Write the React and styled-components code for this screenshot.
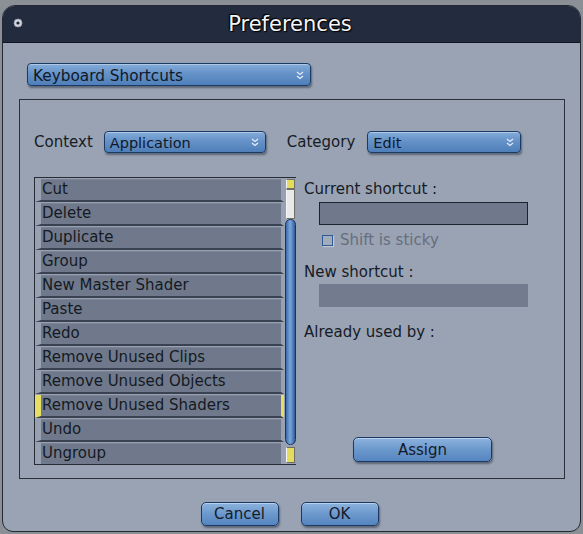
import React from 'react'
import styled, { createGlobalStyle } from 'styled-components'

const GlobalStyle = createGlobalStyle`
  html, body {
    margin: 0;
    padding: 0;
    background: #8b8f96;
  }
  body {
    font-family: "DejaVu Sans", Verdana, sans-serif;
    color: #161b26;
  }
`

const Window = styled.div`
  box-sizing: border-box;
  height: 527px;
  margin: 5px 2px 2px 2px;
  display: flex;
  flex-direction: column;
  background: #9aa3b3;
  border: 1px solid #232833;
  border-radius: 13px 13px 11px 11px;
  overflow: hidden;
`

const TitleBar = styled.div`
  position: relative;
  height: 36px;
  flex: none;
  display: flex;
  align-items: center;
  justify-content: center;
  background: #232c3e;
  border-bottom: 1px solid #10141c;
`

const CloseDot = styled.svg`
  position: absolute;
  left: 10px;
  top: 12px;
`

const Title = styled.div`
  font-size: 21px;
  color: #f4f5f8;
  text-shadow: 0 0 2px #000, 1px 1px 1px #000, -1px -1px 1px #000;
  margin-right: 3px;
`

const Body = styled.div`
  flex: 1;
  display: flex;
  flex-direction: column;
  padding: 20px 15px 0 16px;
`

const Dropdown = styled.div`
  box-sizing: border-box;
  width: ${p => p.width}px;
  height: ${p => p.height || 23}px;
  margin-left: ${p => p.indent || 0}px;
  flex: none;
  display: flex;
  align-items: flex-end;
  justify-content: space-between;
  padding: 0 6px 0 5px;
  border: 1px solid #1c3a66;
  border-radius: 4px;
  background: linear-gradient(#84acd9 0%, #6592c8 45%, #4f7fb9 100%);
  box-shadow: 1px 2px 2px rgba(20, 28, 45, 0.45), inset 0 1px 0 rgba(255, 255, 255, 0.35);
  font-size: ${p => p.fontSize || 14.5}px;
  line-height: 18px;
  color: #111827;
`

const Chevrons = () => (
  <svg width="8" height="9" viewBox="0 0 8 9" style={{ marginBottom: 5 }}>
    <path d="M1 1 L4 3.5 L7 1 M1 5 L4 7.5 L7 5" fill="none" stroke="#e8eef8" strokeWidth="1.2" />
  </svg>
)

const Panel = styled.div`
  box-sizing: border-box;
  height: 380px;
  margin-top: 13px;
  flex: none;
  display: flex;
  flex-direction: column;
  padding: 31px 14px 0 14px;
  border: 1px solid #2a2f3a;
`

const FilterRow = styled.div`
  display: flex;
  align-items: center;
  height: 22px;
`

const Label = styled.span`
  font-size: 15px;
  line-height: 18px;
  margin-right: ${p => p.gap || 0}px;
  color: ${p => (p.disabled ? '#666e7e' : '#161b26')};
`

const Content = styled.div`
  display: flex;
  margin-top: 24px;
  height: 288px;
`

const List = styled.div`
  box-sizing: border-box;
  width: 262px;
  flex: none;
  display: flex;
  border: 1px solid #272c36;
  border-right: none;
  background: #98a1b1;
  overflow: hidden;
`

const Rows = styled.div`
  flex: 1;
  display: flex;
  flex-direction: column;
  padding-top: 1px;
`

const Row = styled.div`
  box-sizing: border-box;
  flex: none;
  height: 23px;
  margin-bottom: 1px;
  padding-left: 1px;
  border-left: 6px solid ${p => (p.selected ? '#e6df63' : 'transparent')};
  border-right: 3px solid ${p => (p.selected ? '#e6df63' : 'transparent')};
  border-bottom: 2px solid #3a4252;
  background: #6f798b;
  background-clip: padding-box;
  box-shadow: inset 0 1px 0 rgba(255, 255, 255, 0.08);
  font-size: 15px;
  line-height: 21px;
  color: #141923;
  white-space: nowrap;
  overflow: hidden;
`

const Scrollbar = styled.div`
  width: 11px;
  flex: none;
  display: flex;
  flex-direction: column;
  margin-left: 1px;
  padding: 1px 0;
`

const Cap = styled.div`
  box-sizing: border-box;
  height: ${p => p.size}px;
  margin: 0 1px;
  flex: none;
  background: ${p => p.color};
  border: 1px solid #6f6f6a;
  border-left-color: #f4f4f4;
`

const Thumb = styled.div`
  flex: 1;
  margin: 0 0 2px 0;
  border: 1px solid #1b345c;
  border-radius: 6px;
  background: linear-gradient(90deg, #3b69a6 0%, #79a7dc 45%, #5a88c2 70%, #2f5b95 100%);
`

const Side = styled.div`
  flex: 1;
  display: flex;
  flex-direction: column;
  padding-left: 8px;
`

const Field = styled.div`
  box-sizing: border-box;
  width: 209px;
  height: 23px;
  margin: ${p => p.mt || 0}px 0 0 15px;
  background: ${p => (p.disabled ? '#727c8e' : '#6f798b')};
  border: ${p => (p.disabled ? 'none' : '1px solid #1b212d')};
`

const CheckRow = styled.div`
  display: flex;
  align-items: center;
  height: 16px;
  margin: 7px 0 0 18px;
`

const Box = styled.div`
  box-sizing: border-box;
  width: 11px;
  height: 11px;
  margin-right: 7px;
  border: 1px solid #2f5a94;
  background: #a3acbb;
  box-shadow: 1px 1px 1px rgba(255, 255, 255, 0.4);
`

const SideLabel = styled(Label)`
  margin-top: ${p => p.mt || 0}px;
`

const Button = styled.div`
  box-sizing: border-box;
  width: ${p => p.width}px;
  height: ${p => p.height || 24}px;
  display: flex;
  align-items: center;
  justify-content: center;
  border: 1px solid #1c3966;
  border-radius: 5px;
  background: linear-gradient(#8db3de 0%, #6b98cc 50%, #5585c0 100%);
  box-shadow: 1px 2px 2px rgba(20, 28, 45, 0.45), inset 0 1px 0 rgba(255, 255, 255, 0.4);
  font-size: 15px;
  color: #151b28;
`

const AssignButton = styled(Button)`
  margin: auto 0 3px 49px;
`

const Footer = styled.div`
  display: flex;
  justify-content: center;
  gap: 22px;
  padding-top: 23px;
  padding-right: 5px;
`

const commands = [
  'Cut',
  'Delete',
  'Duplicate',
  'Group',
  'New Master Shader',
  'Paste',
  'Redo',
  'Remove Unused Clips',
  'Remove Unused Objects',
  'Remove Unused Shaders',
  'Undo',
  'Ungroup',
]

export default function App() {
  return (
    <>
      <GlobalStyle />
      <Window>
        <TitleBar>
          <CloseDot width="10" height="10" viewBox="0 0 10 10">
            <circle cx="5" cy="5" r="4" fill="#d2d6de" stroke="#9aa0ab" strokeWidth="0.8" />
            <circle cx="5" cy="5" r="1.6" fill="#1b2233" />
          </CloseDot>
          <Title>Preferences</Title>
        </TitleBar>
        <Body>
          <Dropdown width={284} indent={8} fontSize={15.3}>
            <span>Keyboard Shortcuts</span>
            <Chevrons />
          </Dropdown>
          <Panel>
            <FilterRow>
              <Label gap={11}>Context</Label>
              <Dropdown width={162} height={22}>
                <span>Application</span>
                <Chevrons />
              </Dropdown>
              <Label gap={12} style={{ marginLeft: 21 }}>Category</Label>
              <Dropdown width={154} height={22}>
                <span>Edit</span>
                <Chevrons />
              </Dropdown>
            </FilterRow>
            <Content>
              <List>
                <Rows>
                  {commands.map(c => (
                    <Row key={c} selected={c === 'Remove Unused Shaders'}>
                      {c}
                    </Row>
                  ))}
                </Rows>
                <Scrollbar>
                  <Cap size={10} color="#e4dc5c" />
                  <Cap size={30} color="#e9e9e9" />
                  <Thumb />
                  <Cap size={16} color="#e4dc5c" />
                </Scrollbar>
              </List>
              <Side>
                <SideLabel mt={3}>Current shortcut :</SideLabel>
                <Field mt={4} />
                <CheckRow>
                  <Box />
                  <Label disabled>Shift is sticky</Label>
                </CheckRow>
                <SideLabel mt={15}>New shortcut :</SideLabel>
                <Field mt={3} disabled />
                <SideLabel mt={16}>Already used by :</SideLabel>
                <AssignButton width={139} height={25}>Assign</AssignButton>
              </Side>
            </Content>
          </Panel>
          <Footer>
            <Button width={78}>Cancel</Button>
            <Button width={78}>OK</Button>
          </Footer>
        </Body>
      </Window>
    </>
  )
}
